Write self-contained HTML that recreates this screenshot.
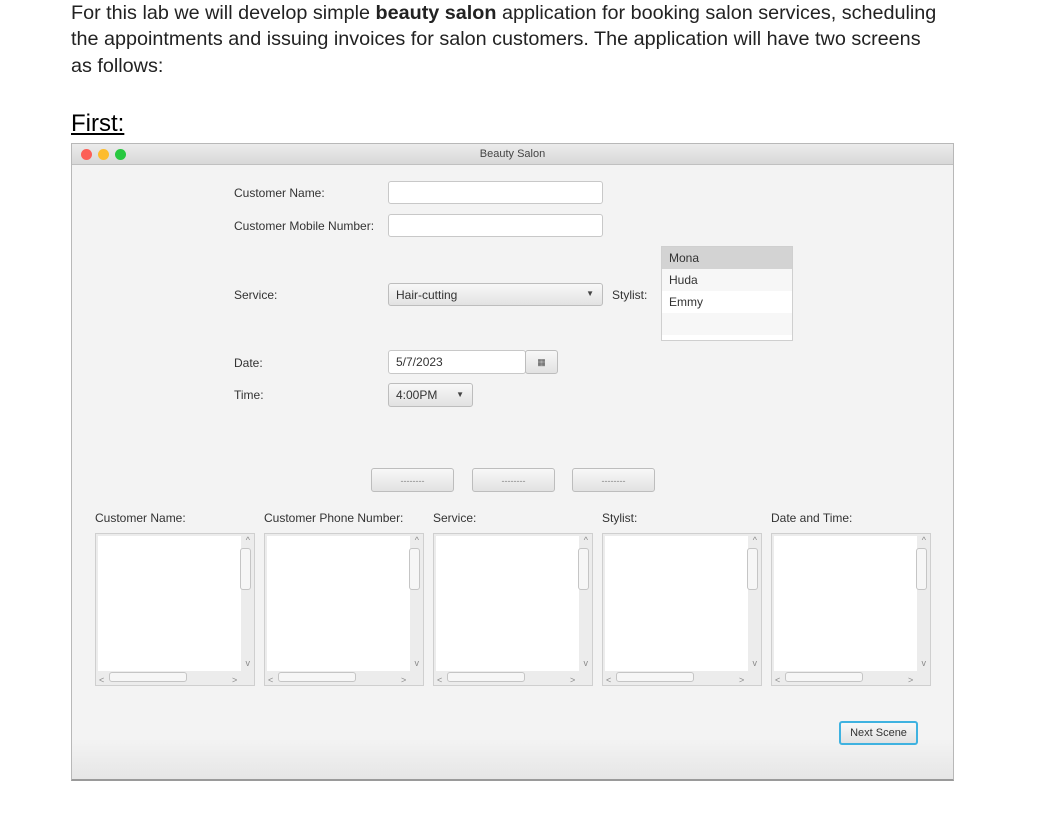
<!DOCTYPE html>
<html><head><style>
body{margin:0;width:1052px;height:824px;background:#fff;position:relative;overflow:hidden;font-family:"Liberation Sans",sans-serif;}
.p{position:absolute;left:71px;font-size:19.8px;color:#222;line-height:27px;white-space:nowrap;}
.a{position:absolute;}
.l{position:absolute;font-size:12px;color:#333;}
.tf{position:absolute;background:#fff;border:1px solid #c8c8c8;border-radius:3px;box-sizing:border-box;}
.btn{position:absolute;background:linear-gradient(#f8f8f8,#e2e2e2);border:1px solid #bdbdbd;border-radius:3px;box-sizing:border-box;font-size:12px;color:#333;}
.ta{position:absolute;top:533px;width:160px;height:153px;border:1px solid #cfcfcf;box-sizing:border-box;background:#ececec;}
.ta .in{position:absolute;left:2px;top:2px;width:143px;height:135px;background:#fff;}
.ta .vt{position:absolute;right:3px;top:14px;width:9px;height:40px;border:1px solid #c5c5c5;border-radius:3px;background:#f6f6f6;}
.ta .ht{position:absolute;left:13px;bottom:3px;width:76px;height:8px;border:1px solid #c5c5c5;border-radius:3px;background:#f6f6f6;}
.ta .ar{position:absolute;font-size:9px;color:#888;}
</style></head><body>
<div class="p" style="top:0px">For this lab we will develop simple <b>beauty salon</b> application for booking salon services, scheduling</div>
<div class="p" style="top:26px">the appointments and issuing invoices for salon customers. The application will have two screens</div>
<div class="p" style="top:53px">as follows:</div>
<div class="a" style="left:71px;top:110px;font-size:24px;color:#000;text-decoration:underline;">First:</div>

<div class="a" style="left:71px;top:143px;width:883px;height:638px;background:#f3f3f3;border:1px solid #b8b8b8;border-bottom:2px solid #9a9a9a;box-sizing:border-box;">
 <div class="a" style="left:0;top:0;width:881px;height:20px;background:linear-gradient(#ececec,#d8d8d8);border-bottom:1px solid #c0c0c0;"></div>
 <div class="a" style="left:9px;top:5px;width:11px;height:11px;border-radius:50%;background:#fc5f57;"></div>
 <div class="a" style="left:26px;top:5px;width:11px;height:11px;border-radius:50%;background:#fdbc2e;"></div>
 <div class="a" style="left:43px;top:5px;width:11px;height:11px;border-radius:50%;background:#28c840;"></div>
 <div class="a" style="left:0;top:4px;width:881px;text-align:center;font-size:11px;color:#444;">Beauty Salon</div>
 <div class="a" style="left:0;bottom:0;width:881px;height:40px;background:linear-gradient(#f3f3f3,#e6e6e6);"></div>
</div>

<div class="l" style="left:234px;top:186px">Customer Name:</div>
<div class="tf" style="left:388px;top:181px;width:215px;height:23px"></div>
<div class="l" style="left:234px;top:219px">Customer Mobile Number:</div>
<div class="tf" style="left:388px;top:214px;width:215px;height:23px"></div>

<div class="l" style="left:234px;top:288px">Service:</div>
<div class="btn" style="left:388px;top:283px;width:215px;height:23px;padding:4px 7px;">Hair-cutting<span style="position:absolute;right:8px;top:5px;font-size:8px;color:#444">▼</span></div>
<div class="l" style="left:612px;top:288px">Stylist:</div>
<div class="a" style="left:661px;top:246px;width:132px;height:95px;border:1px solid #cfcfcf;box-sizing:border-box;background:#fff;font-size:12px;color:#333;">
 <div style="height:22px;background:#d3d3d3;padding:4px 7px;box-sizing:border-box">Mona</div>
 <div style="height:22px;background:#f7f7f7;padding:4px 7px;box-sizing:border-box">Huda</div>
 <div style="height:22px;background:#fff;padding:4px 7px;box-sizing:border-box">Emmy</div>
 <div style="height:22px;background:#f7f7f7"></div>
</div>

<div class="l" style="left:234px;top:356px">Date:</div>
<div class="tf" style="left:388px;top:350px;width:138px;height:24px;font-size:12px;color:#333;padding:4px 7px;">5/7/2023</div>
<div class="btn" style="left:525px;top:350px;width:33px;height:24px;text-align:center;font-size:9px;padding-top:6px;color:#555">▦</div>
<div class="l" style="left:234px;top:388px">Time:</div>
<div class="btn" style="left:388px;top:383px;width:85px;height:24px;padding:4px 7px;">4:00PM<span style="position:absolute;right:8px;top:6px;font-size:8px;color:#444">▼</span></div>

<div class="btn" style="left:371px;top:468px;width:83px;height:24px;text-align:center;color:#888;font-size:9px;padding-top:7px">--------</div>
<div class="btn" style="left:472px;top:468px;width:83px;height:24px;text-align:center;color:#888;font-size:9px;padding-top:7px">--------</div>
<div class="btn" style="left:572px;top:468px;width:83px;height:24px;text-align:center;color:#888;font-size:9px;padding-top:7px">--------</div>

<div class="l" style="left:95px;top:511px">Customer Name:</div>
<div class="l" style="left:264px;top:511px">Customer Phone Number:</div>
<div class="l" style="left:433px;top:511px">Service:</div>
<div class="l" style="left:602px;top:511px">Stylist:</div>
<div class="l" style="left:771px;top:511px">Date and Time:</div>

<div class="ta" style="left:95px"><div class="in"></div><div class="vt"></div><div class="ht"></div><span class="ar" style="right:4px;top:1px">^</span><span class="ar" style="right:4px;top:124px">v</span><span class="ar" style="left:3px;bottom:0">&lt;</span><span class="ar" style="left:136px;bottom:0">&gt;</span></div>
<div class="ta" style="left:264px"><div class="in"></div><div class="vt"></div><div class="ht"></div><span class="ar" style="right:4px;top:1px">^</span><span class="ar" style="right:4px;top:124px">v</span><span class="ar" style="left:3px;bottom:0">&lt;</span><span class="ar" style="left:136px;bottom:0">&gt;</span></div>
<div class="ta" style="left:433px"><div class="in"></div><div class="vt"></div><div class="ht"></div><span class="ar" style="right:4px;top:1px">^</span><span class="ar" style="right:4px;top:124px">v</span><span class="ar" style="left:3px;bottom:0">&lt;</span><span class="ar" style="left:136px;bottom:0">&gt;</span></div>
<div class="ta" style="left:602px"><div class="in"></div><div class="vt"></div><div class="ht"></div><span class="ar" style="right:4px;top:1px">^</span><span class="ar" style="right:4px;top:124px">v</span><span class="ar" style="left:3px;bottom:0">&lt;</span><span class="ar" style="left:136px;bottom:0">&gt;</span></div>
<div class="ta" style="left:771px"><div class="in"></div><div class="vt"></div><div class="ht"></div><span class="ar" style="right:4px;top:1px">^</span><span class="ar" style="right:4px;top:124px">v</span><span class="ar" style="left:3px;bottom:0">&lt;</span><span class="ar" style="left:136px;bottom:0">&gt;</span></div>

<div class="btn" style="left:839px;top:721px;width:79px;height:24px;border:2px solid #3fb2e0;text-align:center;padding-top:4px;font-size:11px">Next Scene</div>
</body></html>
